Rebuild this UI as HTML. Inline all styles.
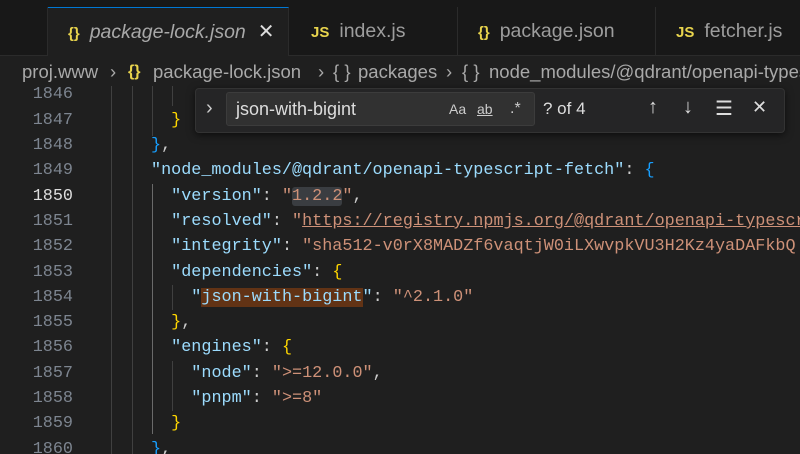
<!DOCTYPE html>
<html><head><style>
*{margin:0;padding:0;box-sizing:border-box}
body{width:800px;height:454px;background:#1f1f1f;overflow:hidden;position:relative;font-family:"Liberation Sans",sans-serif;color:#ccc}
.tabs{position:absolute;left:0;top:0;width:800px;height:56px;background:#181818;border-bottom:1px solid #2b2b2b}
.tab{position:absolute;top:7px;height:49px;border-right:1px solid #2b2b2b;font-size:19.5px;color:#9d9d9d;line-height:49px;white-space:nowrap}
.tab.active{background:#1f1f1f;border-top:1px solid #0078d4;color:#a8a8a8;font-style:italic;height:50px}
.ic{color:#e8d44d;font-weight:bold;font-style:normal;margin-right:10px;font-size:15px}
.crumb{position:absolute;left:0;top:56px;width:800px;height:32px;background:#1f1f1f;font-size:18.5px;line-height:32px;color:#a9a9a9;white-space:nowrap;overflow:hidden}
.crumb span{position:absolute;top:0}
.crumb .y{color:#e8d44d}
.code{position:absolute;left:0;top:86px;width:800px;height:368px;overflow:hidden}
.ln{position:absolute;left:0;width:73px;text-align:right;font-family:"Liberation Mono",monospace;font-size:16.8px;color:#7d8590;line-height:25.3px}
.ln.cur{color:#ddd}
.l{position:absolute;left:151px;font-family:"Liberation Mono",monospace;font-size:16.8px;line-height:25.3px;white-space:pre;color:#ccc}
.k{color:#9cdcfe}.s{color:#ce9178}.b{color:#ffd700}.b2{color:#179fff}
.g{position:absolute;width:1px;background:#404040}
.find{position:absolute;left:195px;top:88px;width:590px;height:45px;background:#252526;border-radius:4px;box-shadow:0 2px 8px rgba(0,0,0,.6);border:1px solid #333}
.inp{position:absolute;left:30px;top:3px;width:309px;height:34px;background:#313131;border:1px solid #3c3c3c;border-radius:3px;font-size:18px;color:#ddd;line-height:32px;padding-left:9px}
</style></head><body>
<div class="tabs">
 <div class="tab" style="left:0;width:48px;border-right:1px solid #2b2b2b"></div>
 <div class="tab active" style="left:48px;width:241px;padding-left:20px"><span class="ic">{}</span>package-lock.json<span style="font-style:normal;color:#ddd;margin-left:12px;font-size:20px">✕</span></div>
 <div class="tab" style="left:289px;width:169px;padding-left:22px"><span class="ic">JS</span>index.js</div>
 <div class="tab" style="left:458px;width:198px;padding-left:20px"><span class="ic">{}</span>package.json</div>
 <div class="tab" style="left:656px;width:160px;padding-left:20px"><span class="ic">JS</span>fetcher.js</div>
</div>
<div class="crumb">
 <span style="left:22px">proj.www</span>
 <span style="left:110px">›</span>
 <span class="y" style="left:128px;font-weight:bold;font-size:16px">{}</span>
 <span style="left:153px">package-lock.json</span>
 <span style="left:318px">›</span>
 <span style="left:333px">{ }</span>
 <span style="left:358px">packages</span>
 <span style="left:446px">›</span>
 <span style="left:462px">{ }</span>
 <span style="left:489px">node_modules/@qdrant/openapi-typescript-fetch</span>
</div>
<div class="code">
 <div class="g" style="left:111px;top:0;height:368px"></div>
 <div class="g" style="left:132px;top:0;height:368px"></div>
 <div class="g" style="left:152px;top:0;height:50px"></div>
 <div class="g" style="left:152px;top:98px;height:250px;background:#6a6a6a"></div>
 <div class="g" style="left:172px;top:0;height:20px"></div>
 <div class="g" style="left:172px;top:199px;height:25px"></div>
 <div class="g" style="left:172px;top:275px;height:50px"></div>
 <div class="ln" style="top:-3.6px">1846</div>
 <div class="ln" style="top:21.7px">1847</div>
 <div class="ln" style="top:47px">1848</div>
 <div class="ln" style="top:72.3px">1849</div>
 <div class="ln cur" style="top:97.6px">1850</div>
 <div class="ln" style="top:122.9px">1851</div>
 <div class="ln" style="top:148.2px">1852</div>
 <div class="ln" style="top:173.5px">1853</div>
 <div class="ln" style="top:198.8px">1854</div>
 <div class="ln" style="top:224.1px">1855</div>
 <div class="ln" style="top:249.4px">1856</div>
 <div class="ln" style="top:274.7px">1857</div>
 <div class="ln" style="top:300px">1858</div>
 <div class="ln" style="top:325.3px">1859</div>
 <div class="ln" style="top:350.6px">1860</div>
 <div class="l" style="top:21.7px">  <span class="b">}</span></div>
 <div class="l" style="top:47px"><span class="b2">}</span>,</div>
 <div class="l" style="top:72.3px"><span class="k">"node_modules/@qdrant/openapi-typescript-fetch"</span>: <span class="b2">{</span></div>
 <div class="l" style="top:97.6px">  <span class="k">"version"</span>: <span class="s">"<span style="background:#3a3d41;border-radius:3px">1.2.2</span>"</span>,</div>
 <div class="l" style="top:122.9px">  <span class="k">"resolved"</span>: <span class="s">"<u>https://registry.npmjs.org/@qdrant/openapi-typescript-fetch</u></span></div>
 <div class="l" style="top:148.2px">  <span class="k">"integrity"</span>: <span class="s">"sha512-v0rX8MADZf6vaqtjW0iLXwvpkVU3H2Kz4yaDAFkbQ</span></div>
 <div class="l" style="top:173.5px">  <span class="k">"dependencies"</span>: <span class="b">{</span></div>
 <div class="l" style="top:198.8px">    <span class="k">"<span style="background:#623315">json-with-bigint</span>"</span>: <span class="s">"^2.1.0"</span></div>
 <div class="l" style="top:224.1px">  <span class="b">}</span>,</div>
 <div class="l" style="top:249.4px">  <span class="k">"engines"</span>: <span class="b">{</span></div>
 <div class="l" style="top:274.7px">    <span class="k">"node"</span>: <span class="s">"&gt;=12.0.0"</span>,</div>
 <div class="l" style="top:300px">    <span class="k">"pnpm"</span>: <span class="s">"&gt;=8"</span></div>
 <div class="l" style="top:325.3px">  <span class="b">}</span></div>
 <div class="l" style="top:350.6px"><span class="b2">}</span>,</div>
</div>
<div class="find">
 <div style="position:absolute;left:10px;top:8px;font-size:20px;color:#ccc">›</div>
 <div class="inp">json-with-bigint
  <span style="position:absolute;left:222px;top:0;font-size:14px;color:#ccc">Aa</span>
  <span style="position:absolute;left:250px;top:0;font-size:14px;color:#ccc;text-decoration:underline">ab</span>
  <span style="position:absolute;left:283px;top:0;font-size:16px;color:#ccc">.*</span>
 </div>
 <div style="position:absolute;left:347px;top:10px;font-size:17px;color:#ddd">? of 4</div>
 <div style="position:absolute;left:452px;top:7px;font-size:20px;color:#ddd">↑</div>
 <div style="position:absolute;left:487px;top:7px;font-size:20px;color:#ddd">↓</div>
 <div style="position:absolute;left:519px;top:7px;font-size:20px;color:#ddd">☰</div>
 <div style="position:absolute;left:556px;top:8px;font-size:18px;color:#ddd">✕</div>
</div>
</body></html>
